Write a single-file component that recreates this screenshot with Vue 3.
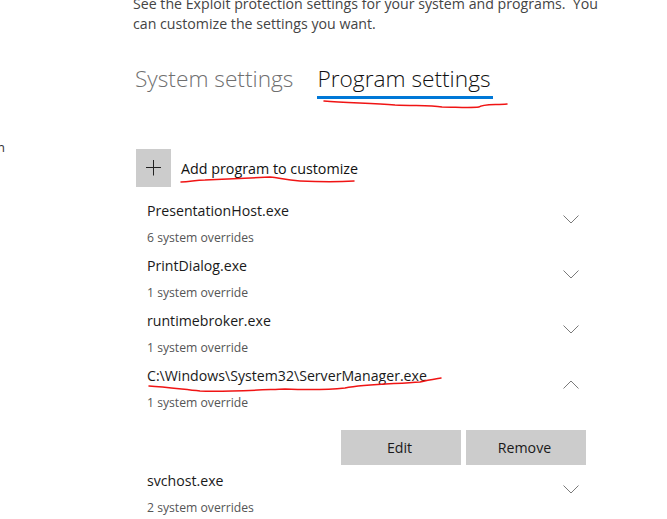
<script setup>
const rows = [
  { name: 'PresentationHost.exe', sub: '6 system overrides' },
  { name: 'PrintDialog.exe', sub: '1 system override' },
  { name: 'runtimebroker.exe', sub: '1 system override' },
  { name: 'C:\\Windows\\System32\\ServerManager.exe', sub: '1 system override', open: true },
  { name: 'svchost.exe', sub: '2 system overrides' },
]
</script>

<template>
  <div class="page">
    <aside class="side"><span class="side-text">n</span></aside>
    <main class="main">
      <p class="intro">See the Exploit protection settings for your system and programs.&nbsp; You<br>can customize the settings you want.</p>
      <nav class="tabs">
        <span class="tab">System settings</span>
        <span class="tab active">Program settings</span>
      </nav>
      <div class="add">
        <span class="plus">
          <svg width="15" height="16" viewBox="0 0 15 16"><path d="M7.5 0V15.5M0 7.5H15" stroke="#222" stroke-width="1" fill="none"/></svg>
        </span>
        <span class="add-label">Add program to customize</span>
      </div>
      <ul class="list">
        <li v-for="r in rows" :key="r.name" class="row">
          <div class="row-head">
            <div class="row-text">
              <div class="name">{{ r.name }}</div>
              <div class="sub">{{ r.sub }}</div>
            </div>
            <svg class="chev" width="16" height="9" viewBox="0 0 16 9">
              <path :d="r.open ? 'M0.5 8.5L8 1L15.5 8.5' : 'M0.5 0.5L8 8L15.5 0.5'" stroke="#7a7a7a" stroke-width="1" fill="none"/>
            </svg>
          </div>
          <div v-if="r.open" class="actions">
            <button class="btn">Edit</button>
            <button class="btn">Remove</button>
          </div>
        </li>
      </ul>
    </main>
    <svg class="ink" width="667" height="519" viewBox="0 0 667 519">
      <g fill="none" stroke="#f01414" stroke-width="1.5" stroke-linecap="round" stroke-linejoin="round">
        <path d="M324 101C345 103 370 103 395 105C415 106 430 105 442 107C455 107 470 108 479 107C482 104 495 105 507 104"/>
        <path d="M181 182C190 182 195 180 205 180C225 179 245 178 270 177C280 178 285 180 300 181C320 182 340 182 354 181"/>
        <path d="M149 386C165 387 180 389 200 391C225 392 260 390 285 389C310 390 335 389 345 388C365 384 395 384 420 382C428 380 435 379 441 378"/>
      </g>
    </svg>
  </div>
</template>

<style scoped>
.page {
  position: relative;
  display: flex;
  width: 667px;
  height: 519px;
  overflow: hidden;
  background: #fff;
  font-family: "Open Sans", "Noto Sans", sans-serif;
  color: #1a1a1a;
}
.side {
  width: 134px;
  flex: none;
  padding-top: 137px;
  overflow: hidden;
}
.side-text {
  display: block;
  margin-left: -3px;
  font-size: 13px;
  line-height: 20px;
  color: #333;
}
.main {
  width: 500px;
  flex: none;
}
.intro {
  margin: -6px 0 0 -1px;
  font-size: 14.18px;
  line-height: 20px;
  color: #444;
  white-space: nowrap;
}
.tabs {
  display: flex;
  gap: 24px;
  margin-top: 29px;
  padding-left: 1px;
}
.tab {
  font-size: 22.7px;
  line-height: 32px;
  font-weight: 300;
  color: #6f6f6f;
  padding-bottom: 1px;
  border-bottom: 3px solid transparent;
  white-space: nowrap;
}
.tab.active {
  color: #111;
  padding-right: 2px;
  border-bottom-color: #0078d7;
}
.add {
  display: flex;
  align-items: center;
  gap: 10px;
  margin: 50px 0 0 2px;
}
.plus {
  width: 35px;
  height: 38px;
  display: flex;
  align-items: center;
  justify-content: center;
  background: #ccc;
}
.add-label {
  font-size: 14.3px;
  color: #111;
}
.list {
  list-style: none;
  margin: 10px 0 0;
  padding: 0 0 0 13px;
}
.row-head {
  height: 55px;
  display: flex;
  align-items: center;
  justify-content: space-between;
  padding-right: 7px;
  box-sizing: border-box;
  width: 439px;
}
.chev {
  margin-top: -11px;
}
.name {
  font-size: 14.15px;
  line-height: 20px;
  color: #1a1a1a;
  white-space: nowrap;
}
.sub {
  margin-top: 7px;
  font-size: 12.2px;
  line-height: 20px;
  color: #555;
  white-space: nowrap;
}
.actions {
  display: flex;
  justify-content: flex-end;
  gap: 5px;
  width: 439px;
  margin-top: 13px;
  margin-bottom: 2px;
}
.btn {
  width: 120px;
  height: 35px;
  border: 0;
  padding: 0 3px 0 0;
  background: #ccc;
  color: #1a1a1a;
  font-family: inherit;
  font-size: 14.2px;
}
.ink {
  position: absolute;
  top: 0;
  left: 0;
  pointer-events: none;
}
</style>
